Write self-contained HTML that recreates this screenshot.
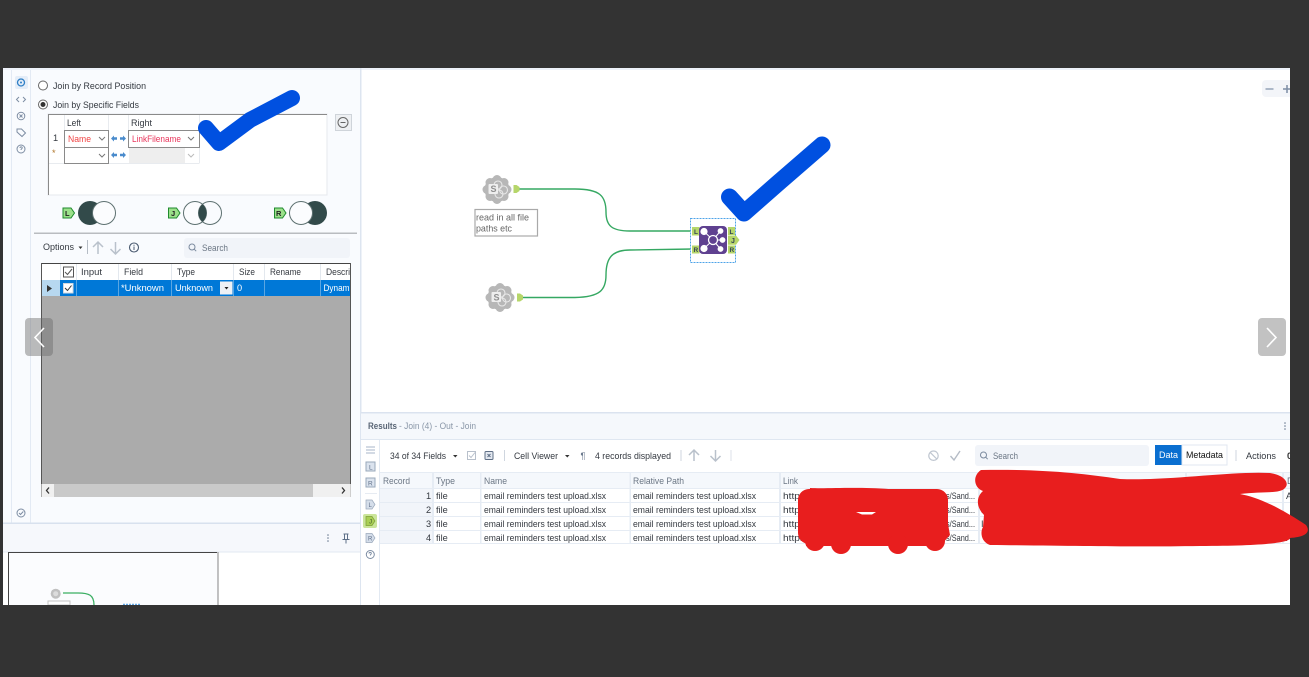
<!DOCTYPE html>
<html lang="en"><head><meta charset="utf-8"><title>Join tool</title>
<style>
html,body{margin:0;padding:0;background:#333;width:1309px;height:677px;overflow:hidden}
svg{display:block}
text{font-family:"Liberation Sans",sans-serif;font-size:9.2px;fill:#343940}
.g{fill:#7b8794}
.w{fill:#fff}
.h{fill:#6b7684}
.r{fill:#f04545}
.ic{fill:none;stroke:#7d8da3;stroke-width:1}
.ar{fill:none;stroke:#b9c1cb;stroke-width:1.5}
</style></head><body>
<svg width="1309" height="677" viewBox="0 0 1309 677" xmlns="http://www.w3.org/2000/svg">
<rect width="1309" height="677" fill="#333"/>
<rect x="3" y="68" width="1287" height="537" fill="#fff"/>
<rect x="3" y="68" width="357" height="456" fill="#f9fbfe"/>
<rect x="3" y="68" width="1287" height="2" fill="#eef2fa"/>
<rect x="11" y="70" width="1" height="453" fill="#e3eaf4"/>
<rect x="30" y="70" width="1" height="453" fill="#e3eaf4"/>
<rect x="360" y="68" width="1.5" height="537" fill="#dde5f0"/>

<!-- rail -->
<rect x="15" y="76" width="13" height="13" rx="2" fill="#e4edf8"/>
<circle cx="21" cy="82.500" r="3.500" fill="none" stroke="#2f7fc6" stroke-width="1.300"/><circle cx="21" cy="82.500" r="1" fill="#2f7fc6"/>
<path class="ic" d="M19 97l-2.500 2.500 2.500 2.500M23 97l2.500 2.500-2.500 2.500"/>
<circle class="ic" cx="21" cy="116" r="3.800"/><path class="ic" d="M19.500 114.500l3 3M22.500 114.500l-3 3"/>
<path class="ic" d="M17 129h4.500l4 4-3.500 3.500-5-4.500z"/>
<circle class="ic" cx="21" cy="149" r="4"/><path class="ic" d="M20 148c0-1.500 2.500-1.500 2.200 0-.2.800-1.200.8-1.200 2"/>
<circle class="ic" cx="21" cy="513" r="4"/><path class="ic" d="M19 513l1.500 1.500 2.800-3"/>

<!-- radios -->
<circle cx="43" cy="85.500" r="4.500" fill="#fff" stroke="#666"/>
<text x="53" y="89" textLength="93" lengthAdjust="spacingAndGlyphs">Join by Record Position</text>
<circle cx="43" cy="104.500" r="4.500" fill="#fff" stroke="#666"/><circle cx="43" cy="104.500" r="2.500" fill="#333"/>
<text x="53" y="108" textLength="86" lengthAdjust="spacingAndGlyphs">Join by Specific Fields</text>

<!-- join table -->
<rect x="48" y="114" width="279" height="81" fill="#fff" stroke="#e6e9ee"/>
<path d="M48.500 195V114.500H327" fill="none" stroke="#8a8a8a"/>
<path d="M64.500 115V130M108.500 115V163M128.500 115V130M199.500 115V163M49 163.500H199.500" stroke="#e8ebef" fill="none"/>
<text x="67" y="126" textLength="14" lengthAdjust="spacingAndGlyphs">Left</text>
<text x="131" y="126" textLength="21" lengthAdjust="spacingAndGlyphs">Right</text>
<text x="53" y="141">1</text><text x="52" y="156" style="fill:#b0762a">*</text>
<rect x="64.500" y="130.500" width="44" height="17" fill="#fff" stroke="#8a8a8a"/>
<rect x="64.500" y="147.500" width="44" height="16" fill="#fff" stroke="#8a8a8a"/>
<rect x="128.500" y="130.500" width="71" height="17" fill="#fff" stroke="#8a8a8a"/>
<rect x="129" y="148" width="56" height="15" fill="#eee"/>
<text class="r" x="68" y="142" textLength="23" lengthAdjust="spacingAndGlyphs">Name</text>
<text x="132" y="142" textLength="49" lengthAdjust="spacingAndGlyphs" style="fill:#e8355b">LinkFilename</text>
<path d="M99 137l3 3 3-3M99 154l3 3 3-3M188 137l3 3 3-3" fill="none" stroke="#777"/>
<path d="M188 154l3 3 3-3" fill="none" stroke="#bbb"/>
<g fill="#4a8bcc"><path d="M111 138.500l3-3v1.800h3v2.400h-3v1.800zM126 138.500l-3-3v1.800h-3v2.400h3v1.800z"/><path d="M111 155l3-3v1.800h3v2.400h-3v1.800zM126 155l-3-3v1.800h-3v2.400h3v1.800z"/></g>
<rect x="335.500" y="114.500" width="16" height="16" fill="#eef0f3" stroke="#cfd4da"/>
<circle cx="343" cy="122.500" r="5" fill="none" stroke="#666"/><path d="M340.500 122.500h5" stroke="#666"/>

<!-- venn -->
<path d="M63 208h8l3.500 5-3.500 5h-8z" fill="#9be08a" stroke="#1f8a2e"/><text x="65" y="216" style="font-size:7.500px;font-weight:bold;fill:#222">L</text>
<path d="M168.500 208h8l3.500 5-3.500 5h-8z" fill="#9be08a" stroke="#1f8a2e"/><text x="171" y="216" style="font-size:7.500px;font-weight:bold;fill:#222">J</text>
<path d="M274.500 208h8l3.500 5-3.500 5h-8z" fill="#9be08a" stroke="#1f8a2e"/><text x="276" y="216" style="font-size:7.500px;font-weight:bold;fill:#222">R</text>
<circle cx="90" cy="213" r="12" fill="#324a4a"/>
<circle cx="104" cy="213" r="11.500" fill="#fbfcfe" stroke="#5d7070"/>
<circle cx="195" cy="213" r="11.500" fill="#fbfcfe" stroke="#5d7070"/>
<circle cx="210" cy="213" r="11.500" fill="none" stroke="#5d7070"/>
<path d="M202.500 204.300a11.500 11.500 0 0 1 0 17.400a11.500 11.500 0 0 1 0-17.400z" fill="#324a4a"/>
<circle cx="315" cy="213" r="12" fill="#324a4a"/>
<circle cx="301" cy="213" r="11.500" fill="#fbfcfe" stroke="#5d7070"/>

<rect x="34" y="232.500" width="323" height="1.500" fill="#b9bcc0"/>

<!-- options -->
<text x="43" y="250" textLength="31" lengthAdjust="spacingAndGlyphs">Options</text>
<path d="M78.500 246.500h4l-2 2.500z" fill="#333"/>
<rect x="87" y="240" width="1" height="14" fill="#b5bcc5"/>
<path class="ar" d="M98 254v-12M93 247l5-5 5 5M115.500 242v12M110.500 249l5 5 5-5"/>
<circle cx="134" cy="247.500" r="4.500" fill="none" stroke="#4a5a70" stroke-width="1.100"/><path d="M134 246.500v3.500M134 244.800v1" stroke="#4a5a70"/>
<rect x="184" y="238" width="166" height="20" rx="3" fill="#f1f4f9"/>
<circle cx="192" cy="247" r="3" fill="none" stroke="#7b8a9e"/><path d="M194.200 249.200l2 2" stroke="#7b8a9e"/>
<text class="h" x="202" y="251" textLength="26" lengthAdjust="spacingAndGlyphs">Search</text>

<!-- field grid -->
<rect x="41" y="263" width="310" height="234" fill="#ababab"/>
<rect x="42" y="264" width="308" height="16" fill="#fff"/>
<rect x="41" y="263" width="310" height="1" fill="#444"/>
<rect x="41" y="263" width="1" height="221" fill="#555"/>
<rect x="350" y="263" width="1" height="221" fill="#555"/>
<path d="M60.500 264v16M76.500 264v16M118.500 264v16M171.500 264v16M233.500 264v16M264.500 264v16M320.500 264v16" stroke="#e3e8ee"/>
<text x="81" y="275" textLength="21" lengthAdjust="spacingAndGlyphs">Input</text>
<text x="124" y="275" textLength="19" lengthAdjust="spacingAndGlyphs">Field</text>
<text x="177" y="275" textLength="18" lengthAdjust="spacingAndGlyphs">Type</text>
<text x="239" y="275" textLength="16" lengthAdjust="spacingAndGlyphs">Size</text>
<text x="270" y="275" textLength="31" lengthAdjust="spacingAndGlyphs">Rename</text>
<text x="326" y="275" textLength="24" lengthAdjust="spacingAndGlyphs">Descri</text>
<rect x="63.500" y="267" width="10" height="10" fill="#fff" stroke="#555"/><path d="M65 272l2.500 2.500 4.500-5.500" fill="none" stroke="#555"/>
<rect x="42" y="280" width="18" height="16" fill="#b7d8f0"/>
<rect x="60" y="280" width="290" height="16" fill="#0078d7"/>
<path d="M47 285l5 3.500-5 3.500z" fill="#333"/>
<rect x="63.500" y="283.500" width="9.500" height="9.500" fill="#fff" stroke="#d0d8e0"/><path d="M65 288l2.500 2.500 4-5" fill="none" stroke="#333"/>
<path d="M76.500 280v16M118.500 280v16M171.500 280v16M233.500 280v16M264.500 280v16M320.500 280v16" stroke="#5aa6e2"/>
<text class="w" x="121" y="291" textLength="43" lengthAdjust="spacingAndGlyphs">*Unknown</text>
<text class="w" x="175" y="291" textLength="38" lengthAdjust="spacingAndGlyphs">Unknown</text>
<rect x="220" y="281.500" width="12.500" height="13" fill="#eef1f5"/><path d="M224.500 287h4l-2 2.500z" fill="#222"/>
<text class="w" x="237" y="291">0</text>
<text class="w" x="323.500" y="291" textLength="26" lengthAdjust="spacingAndGlyphs">Dynam</text>
<rect x="42" y="484" width="308.500" height="13" fill="#f0f0f0"/>
<rect x="54" y="484" width="259" height="13" fill="#c9c9c9"/>
<path d="M49 487.500l-2.500 3 2.500 3M342 487.500l2.500 3-2.500 3" fill="none" stroke="#333" stroke-width="1.300"/>

<!-- bottom-left -->
<rect x="3" y="523" width="357" height="82" fill="#fff"/>
<rect x="3" y="524" width="357" height="28" fill="#f6f8fc"/>
<rect x="3" y="522.500" width="357" height="1.500" fill="#d8e1ee"/>
<rect x="3" y="551.500" width="357" height="1" fill="#e2e8f2"/>
<circle cx="328" cy="535" r=".8" fill="#6a7a90"/><circle cx="328" cy="538" r=".8" fill="#6a7a90"/><circle cx="328" cy="541" r=".8" fill="#6a7a90"/>
<path d="M343.500 534h5M344.500 534v5M347.500 534v5M342.500 539.500h7M346 539.500v4" fill="none" stroke="#5e7088"/>
<rect x="8.500" y="552.500" width="209.500" height="53" fill="#fbfcfe"/>
<path d="M8.500 605V552.500H217" fill="none" stroke="#444"/>
<path d="M218 552v53" stroke="#999" stroke-width="1.200"/>
<circle cx="55.700" cy="593.700" r="5" fill="#c0c0c0"/><circle cx="55.700" cy="593.700" r="2.500" fill="#dcdcdc"/>
<rect x="48" y="601" width="22" height="4" fill="#fff" stroke="#c4c4c4"/>
<path d="M63 593h15c11 0 16 2 16 12" fill="none" stroke="#3aae62" stroke-width="1.300"/>
<path d="M123 604.500h17" stroke="#63a8e6" stroke-width="1.500" stroke-dasharray="2 1"/>

<!-- prev/next -->
<rect x="25" y="318" width="28" height="38" rx="4" fill="#6a6a6a" fill-opacity=".45"/>
<path d="M44 328l-9 9.500 9 9.500" fill="none" stroke="#fff" stroke-width="1.600"/>
<rect x="1258" y="318" width="28" height="38" rx="4" fill="#9a9a9a" fill-opacity=".6"/>
<path d="M1267 328l9 9.500-9 9.500" fill="none" stroke="#fff" stroke-width="1.600"/>

<!-- zoom ctl -->
<path d="M1290 80h-24a4 4 0 0 0-4 4v9a4 4 0 0 0 4 4h24z" fill="#f3f5f9"/>
<path d="M1265.500 89h8" stroke="#95a3b8" stroke-width="1.500"/>
<path d="M1283 89h7M1287 85v8" stroke="#7d8da5" stroke-width="1.500"/>

<!-- wires -->
<path d="M518 189H575C600 189 606 196 606 212C606 226 612 231 630 231H693" fill="none" stroke="#35a862" stroke-width="1.400"/>
<path d="M519 297.500H575C600 297 606 290 606 275C606 258 612 250 630 250L693 249" fill="none" stroke="#35a862" stroke-width="1.400"/>

<!-- tool 1 -->
<g fill="#b7b7b7"><circle cx="497" cy="189.500" r="12.500"/><circle cx="497" cy="179.500" r="4.500"/><circle cx="497" cy="199.500" r="4.500"/><circle cx="487" cy="189.500" r="4.500"/><circle cx="507" cy="189.500" r="4.500"/><circle cx="490" cy="182.500" r="4.500"/><circle cx="504" cy="182.500" r="4.500"/><circle cx="490" cy="196.500" r="4.500"/><circle cx="504" cy="196.500" r="4.500"/></g>
<circle cx="498" cy="185" r="4" fill="none" stroke="#e8e8e8" stroke-width="1.100"/><circle cx="503.500" cy="190" r="4" fill="none" stroke="#e8e8e8" stroke-width="1.100"/><circle cx="499" cy="194" r="4" fill="none" stroke="#e8e8e8" stroke-width="1.100"/>
<rect x="488.500" y="184" width="9.500" height="10" rx="1" fill="#eee"/>
<text x="490.500" y="192" style="font-size:9px;font-weight:bold;fill:#8f8f8f">S</text>
<path d="M513.500 185h3l3 2v4l-3 2h-3z" fill="#b6d66a"/>
<rect x="475" y="209.500" width="62.500" height="26.500" fill="#fff" stroke="#a9a9a9" stroke-width="1.200"/>
<text x="476" y="220.500" textLength="53" lengthAdjust="spacingAndGlyphs" style="font-size:9.200px;fill:#666">read in all file</text>
<text x="476" y="231.500" textLength="36" lengthAdjust="spacingAndGlyphs" style="font-size:9.200px;fill:#666">paths etc</text>

<!-- tool 2 -->
<g fill="#b7b7b7"><circle cx="500" cy="297.500" r="12.500"/><circle cx="500" cy="287.500" r="4.500"/><circle cx="500" cy="307.500" r="4.500"/><circle cx="490" cy="297.500" r="4.500"/><circle cx="510" cy="297.500" r="4.500"/><circle cx="493" cy="290.500" r="4.500"/><circle cx="507" cy="290.500" r="4.500"/><circle cx="493" cy="304.500" r="4.500"/><circle cx="507" cy="304.500" r="4.500"/></g>
<circle cx="501" cy="293" r="4" fill="none" stroke="#e8e8e8" stroke-width="1.100"/><circle cx="506.500" cy="298" r="4" fill="none" stroke="#e8e8e8" stroke-width="1.100"/><circle cx="502" cy="302" r="4" fill="none" stroke="#e8e8e8" stroke-width="1.100"/>
<rect x="491.500" y="292" width="9.500" height="10" rx="1" fill="#eee"/>
<text x="493.500" y="300.500" style="font-size:9px;font-weight:bold;fill:#8f8f8f">S</text>
<path d="M517 293.500h3l3 2v4l-3 2h-3z" fill="#b6d66a"/>

<!-- join tool -->
<rect x="690.500" y="218.500" width="45" height="44" fill="#fff" stroke="#4da3e8" stroke-dasharray="2 1"/>
<rect x="692" y="227" width="7.500" height="8.500" fill="#b6d66a"/><rect x="692" y="245.500" width="7.500" height="8" fill="#b6d66a"/>
<text x="694" y="234" style="font-size:6.500px;font-weight:bold;fill:#345">L</text>
<text x="693.500" y="252" style="font-size:6.500px;font-weight:bold;fill:#345">R</text>
<rect x="699" y="226" width="28" height="28" rx="4" fill="#5f4190"/>
<path d="M713 240L703.500 231M713 240L720.500 231M713 240L723 240M713 240L720.500 249M713 240L703.500 249" stroke="#fff" stroke-width="1"/>
<circle cx="713" cy="240" r="4.500" fill="#5f4190" stroke="#fff" stroke-width="1.300"/>
<circle cx="704" cy="231.500" r="3.600" fill="#fff"/><circle cx="720.500" cy="231" r="2.900" fill="#fff"/><circle cx="722.500" cy="240" r="2.900" fill="#fff"/><circle cx="720.500" cy="249" r="2.900" fill="#fff"/><circle cx="704" cy="248.500" r="3.600" fill="#fff"/>
<rect x="728" y="227" width="7" height="8" fill="#b6d66a"/>
<path d="M728 235.500h8l3.500 4.500-3.500 4.800h-8z" fill="#b6d66a"/>
<rect x="728" y="245.500" width="7" height="8" fill="#b6d66a"/>
<text x="729.500" y="234" style="font-size:6.500px;font-weight:bold;fill:#345">L</text>
<text x="731" y="243" style="font-size:7px;font-weight:bold;fill:#345">J</text>
<text x="729.500" y="252" style="font-size:6.500px;font-weight:bold;fill:#345">R</text>

<!-- checks -->
<path d="M206 128L219 143L250 120L292 98" fill="none" stroke="#0050e0" stroke-width="16" stroke-linecap="round" stroke-linejoin="round"/>
<path d="M729.500 197L744 213L777 184L822 145" fill="none" stroke="#0050e0" stroke-width="17" stroke-linecap="round" stroke-linejoin="round"/>

<!-- results -->
<rect x="361" y="412" width="929" height="193" fill="#fff"/>
<rect x="361" y="413" width="929" height="26" fill="#f5f8fc"/>
<rect x="361" y="412" width="929" height="1.500" fill="#dbe3ef"/>
<rect x="361" y="439" width="929" height="1" fill="#dfe7f1"/>
<text x="368" y="429" textLength="29" lengthAdjust="spacingAndGlyphs" style="font-weight:bold;fill:#5a6676">Results</text>
<text x="399" y="429" textLength="77" lengthAdjust="spacingAndGlyphs" style="fill:#8a97a8"> - Join (4) - Out - Join</text>
<circle cx="1285" cy="423" r=".8" fill="#6a7a90"/><circle cx="1285" cy="426" r=".8" fill="#6a7a90"/><circle cx="1285" cy="429" r=".8" fill="#6a7a90"/>

<rect x="379" y="440" width="1" height="165" fill="#e2e9f2"/>
<path d="M366 447h9M366 450h9M366 453h9" stroke="#a7b5c8"/>
<rect x="366" y="462" width="9" height="9" fill="#dbe3ee" stroke="#9aa8bb"/><text x="369" y="469.500" style="font-size:6.500px;fill:#60708a">L</text>
<rect x="366" y="478" width="9" height="9" fill="#dbe3ee" stroke="#9aa8bb"/><text x="368" y="485.500" style="font-size:6.500px;fill:#60708a">R</text>
<rect x="365" y="493" width="12" height="1" fill="#e6ebf2"/>
<path d="M366 500h6l3 4.500-3 4.500h-6z" fill="#d5deea" stroke="#9aa8bb" stroke-width=".7"/><text x="368.500" y="507" style="font-size:6px;fill:#60708a">L</text>
<rect x="363" y="514" width="14" height="14" rx="2" fill="#cbe59a"/>
<path d="M366 516.500h6l3 4.500-3 4.500h-6z" fill="#a9cf55" stroke="#7c9f35" stroke-width=".7"/><text x="369" y="523.500" style="font-size:6px;fill:#40552a">J</text>
<path d="M366 533.500h6l3 4.500-3 4.500h-6z" fill="#d5deea" stroke="#9aa8bb" stroke-width=".7"/><text x="368" y="540.500" style="font-size:6px;fill:#60708a">R</text>
<circle class="ic" cx="370.300" cy="554.500" r="4"/><path class="ic" d="M369 553.500c0-1.500 2.500-1.500 2.300 0-.2.800-1 .8-1 2"/>

<text x="390" y="459" textLength="56" lengthAdjust="spacingAndGlyphs">34 of 34 Fields</text>
<path d="M453 455h4.500l-2.200 2.500z" fill="#333"/>
<rect x="467.500" y="451.500" width="8" height="8" fill="none" stroke="#b8c0cb"/><path d="M469 455.500l2 2 4-5" fill="none" stroke="#b8c0cb"/>
<rect x="485" y="451.500" width="8" height="8" rx="1" fill="#e3e8f0" stroke="#5f6f86"/><path d="M487.500 454l3 3M490.500 454l-3 3" stroke="#5f6f86"/>
<rect x="504" y="450" width="1" height="11" fill="#cfd6df"/>
<text x="514" y="459" textLength="44" lengthAdjust="spacingAndGlyphs">Cell Viewer</text>
<path d="M565 455h4.500l-2.200 2.500z" fill="#333"/>
<text x="580.500" y="459" style="fill:#6b7a8e">¶</text>
<text x="595" y="459" textLength="76" lengthAdjust="spacingAndGlyphs">4 records displayed</text>
<rect x="680.500" y="450" width="1" height="11" fill="#cfd6df"/>
<path class="ar" d="M694 461v-11M689 455l5-5 5 5M715.500 450v11M710.500 456l5 5 5-5"/>
<rect x="730.500" y="450" width="1" height="11" fill="#dce2ea"/>
<circle cx="933.500" cy="455.700" r="4.700" fill="none" stroke="#bfc6d0" stroke-width="1.200"/><path d="M930.200 452.400l6.600 6.600" stroke="#bfc6d0" stroke-width="1.200"/>
<path d="M950.500 456l3.500 4 6-9" fill="none" stroke="#b5bcc6" stroke-width="1.400"/>
<rect x="975" y="445" width="174" height="21" rx="3" fill="#f1f4f9"/>
<circle cx="983.500" cy="455" r="3" fill="none" stroke="#7b8a9e"/><path d="M985.700 457.200l2 2" stroke="#7b8a9e"/>
<text class="h" x="993" y="459" textLength="25" lengthAdjust="spacingAndGlyphs">Search</text>
<rect x="1155" y="445" width="27" height="20" fill="#0a6fd0"/>
<rect x="1182" y="445" width="45" height="20" fill="#fff" stroke="#e0e7f0"/>
<text class="w" x="1159" y="458" textLength="19" lengthAdjust="spacingAndGlyphs">Data</text>
<text x="1186" y="458" textLength="37" lengthAdjust="spacingAndGlyphs" style="fill:#111">Metadata</text>
<rect x="1235.500" y="450" width="1" height="11" fill="#cfd6df"/>
<text x="1246" y="459" textLength="30" lengthAdjust="spacingAndGlyphs">Actions</text>
<text x="1287" y="459" style="font-weight:bold;fill:#333">0</text>

<!-- results grid -->
<rect x="380" y="472" width="910" height="72" fill="#e6ecf4"/>
<g fill="#f5f8fc">
<rect x="380" y="473" width="52" height="15"/><rect x="434" y="473" width="46" height="15"/><rect x="481.500" y="473" width="148" height="15"/><rect x="631" y="473" width="148" height="15"/><rect x="781" y="473" width="197" height="15"/><rect x="980" y="473" width="205" height="15"/><rect x="1187" y="473" width="95" height="15"/><rect x="1284" y="473" width="6" height="15"/>
</g>
<g fill="#f2f5fa"><rect x="380" y="489" width="52" height="13"/><rect x="380" y="503" width="52" height="13"/><rect x="380" y="517" width="52" height="13"/><rect x="380" y="531" width="52" height="12"/></g>
<g fill="#fff">
<rect x="434" y="489" width="46" height="13"/><rect x="481.500" y="489" width="148" height="13"/><rect x="631" y="489" width="148" height="13"/><rect x="781" y="489" width="197" height="13"/><rect x="980" y="489" width="205" height="13"/><rect x="1187" y="489" width="95" height="13"/><rect x="1284" y="489" width="6" height="13"/>
<rect x="434" y="503" width="46" height="13"/><rect x="481.500" y="503" width="148" height="13"/><rect x="631" y="503" width="148" height="13"/><rect x="781" y="503" width="197" height="13"/><rect x="980" y="503" width="205" height="13"/><rect x="1187" y="503" width="95" height="13"/><rect x="1284" y="503" width="6" height="13"/>
<rect x="434" y="517" width="46" height="13"/><rect x="481.500" y="517" width="148" height="13"/><rect x="631" y="517" width="148" height="13"/><rect x="781" y="517" width="197" height="13"/><rect x="980" y="517" width="205" height="13"/><rect x="1187" y="517" width="95" height="13"/><rect x="1284" y="517" width="6" height="13"/>
<rect x="434" y="531" width="46" height="12"/><rect x="481.500" y="531" width="148" height="12"/><rect x="631" y="531" width="148" height="12"/><rect x="781" y="531" width="197" height="12"/><rect x="980" y="531" width="205" height="12"/><rect x="1187" y="531" width="95" height="12"/><rect x="1284" y="531" width="6" height="12"/>
</g>
<text class="h" x="383" y="484" textLength="27" lengthAdjust="spacingAndGlyphs">Record</text>
<text class="h" x="436" y="484" textLength="19" lengthAdjust="spacingAndGlyphs">Type</text>
<text class="h" x="484" y="484" textLength="23" lengthAdjust="spacingAndGlyphs">Name</text>
<text class="h" x="633" y="484" textLength="51" lengthAdjust="spacingAndGlyphs">Relative Path</text>
<text class="h" x="783" y="484" textLength="15" lengthAdjust="spacingAndGlyphs">Link</text>
<text class="h" x="1287" y="484">D</text>

<text x="426" y="499">1</text><text x="436" y="499">file</text>
<text x="484" y="499" textLength="122" lengthAdjust="spacingAndGlyphs">email reminders test upload.xlsx</text>
<text x="633" y="499" textLength="123" lengthAdjust="spacingAndGlyphs">email reminders test upload.xlsx</text>
<text x="783" y="499" textLength="22" lengthAdjust="spacingAndGlyphs">https</text><text x="946" y="499" textLength="29" lengthAdjust="spacingAndGlyphs">s/Sand...</text>
<text x="1286" y="499">A</text>
<text x="426" y="513">2</text><text x="436" y="513">file</text>
<text x="484" y="513" textLength="122" lengthAdjust="spacingAndGlyphs">email reminders test upload.xlsx</text>
<text x="633" y="513" textLength="123" lengthAdjust="spacingAndGlyphs">email reminders test upload.xlsx</text>
<text x="783" y="513" textLength="22" lengthAdjust="spacingAndGlyphs">https</text><text x="946" y="513" textLength="29" lengthAdjust="spacingAndGlyphs">s/Sand...</text>
<text x="981" y="513">I</text>
<text x="426" y="527">3</text><text x="436" y="527">file</text>
<text x="484" y="527" textLength="122" lengthAdjust="spacingAndGlyphs">email reminders test upload.xlsx</text>
<text x="633" y="527" textLength="123" lengthAdjust="spacingAndGlyphs">email reminders test upload.xlsx</text>
<text x="783" y="527" textLength="22" lengthAdjust="spacingAndGlyphs">https</text><text x="946" y="527" textLength="29" lengthAdjust="spacingAndGlyphs">s/Sand...</text>
<text x="981" y="527">I</text>
<text x="426" y="541">4</text><text x="436" y="541">file</text>
<text x="484" y="541" textLength="122" lengthAdjust="spacingAndGlyphs">email reminders test upload.xlsx</text>
<text x="633" y="541" textLength="123" lengthAdjust="spacingAndGlyphs">email reminders test upload.xlsx</text>
<text x="783" y="541" textLength="22" lengthAdjust="spacingAndGlyphs">https</text><text x="946" y="541" textLength="29" lengthAdjust="spacingAndGlyphs">s/Sand...</text>
<text x="1286" y="541">A</text>

<!-- dark frame (before scribbles: the red tip crosses the frame) -->
<rect x="0" y="605" width="1309" height="72" fill="#333"/>
<rect x="1290" y="0" width="19" height="677" fill="#333"/>
<rect x="0" y="0" width="3" height="677" fill="#333"/>
<rect x="0" y="0" width="1309" height="68" fill="#333"/>

<!-- red scribbles -->
<g fill="#e81e1e">
<rect x="798" y="489" width="150" height="55" rx="11"/>
<path d="M810 488C830 489 860 486 900 490C920 492 935 488 942 491L950 535L940 546L806 546Z"/>
<circle cx="815" cy="541" r="10"/><circle cx="841" cy="544" r="10"/><circle cx="898" cy="544" r="10"/><circle cx="935" cy="541" r="10"/>
<path d="M981 470C1040 469 1080 473 1120 479C1170 481 1230 471 1270 473C1284 475 1290 483 1285 488C1280 494 1265 491 1240 494C1256 497 1276 505 1306 525C1311 532 1306 537 1290 538C1290 543 1260 546 1200 546C1130 547 1080 546 990 545C981 542 980 532 983 527L984 515C976 507 976 497 983 491C974 488 972 476 981 470Z"/>
</g>
<path d="M856 512h20l-4 2.500h-10z" fill="#fff"/>
</svg>
</body></html>
